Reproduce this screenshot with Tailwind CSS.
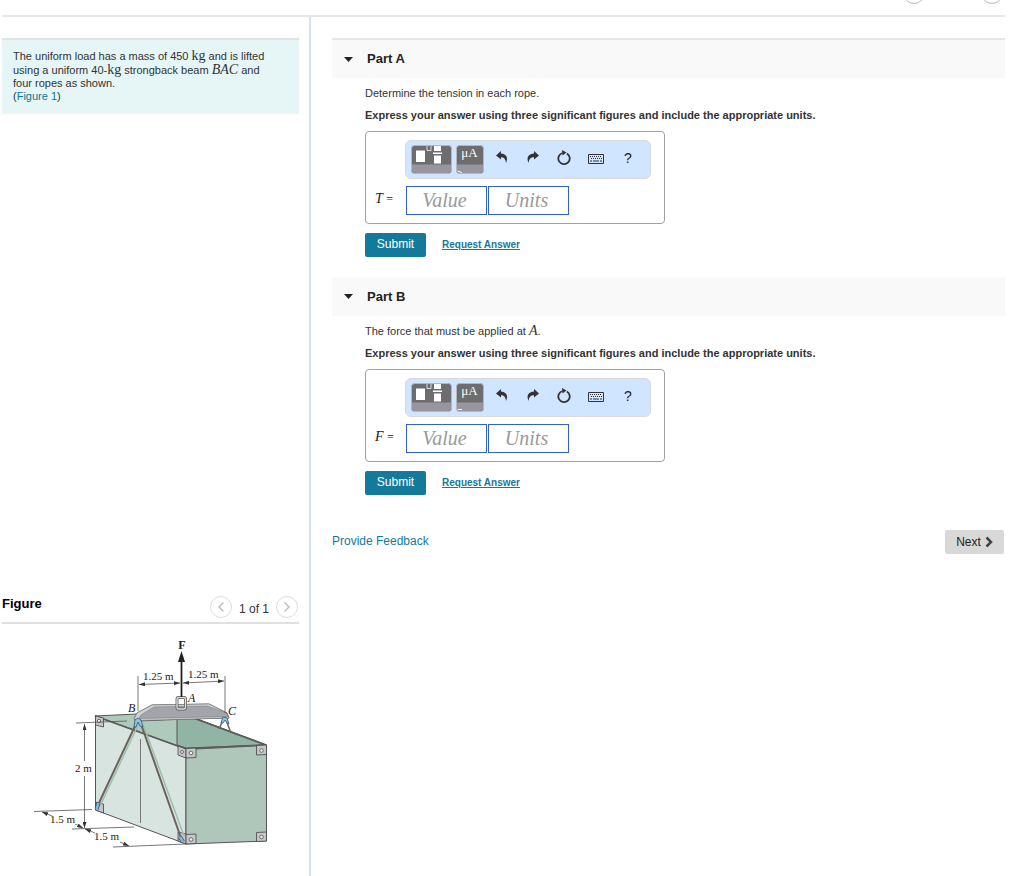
<!DOCTYPE html>
<html lang="en">
<head>
    <meta charset="UTF-8">
    <meta name="viewport" content="width=device-width, initial-scale=1.0">
    <title>Strongback Beam - Homework</title>
    <script src="https://cdn.jsdelivr.net/npm/@tailwindcss/browser@4"></script>
</head>
<body class="flex flex-col min-h-screen bg-white font-['Liberation_Sans',sans-serif] text-[11px] text-[#333]">

    <!-- Top bar -->
    <header class="ml-0.5 mr-[19px] h-[17px] overflow-hidden border-b-2 border-[#e6e6e6] flex justify-end items-end gap-14 pb-[11px] pr-0.5">
        <button aria-label="Previous item" class="shrink-0 w-[22px] h-[22px] rounded-full border border-[#bbb]"></button>
        <button aria-label="Next item" class="shrink-0 w-[22px] h-[22px] rounded-full border border-[#bbb]"></button>
    </header>

    <div class="flex flex-1">
        <!-- Problem text and figure -->
        <aside class="w-[311px] shrink-0 pl-0.5 pr-2.5 pt-[21px] border-r-2 border-[#d8e0ea] flex flex-col justify-between">
            <div class="border-t-2 border-[#dfe5e5] bg-[#e6f6f7] pl-[11px] pr-6 pt-[9px] pb-[11px] leading-[13px]">
                <p>The uniform load has a mass of 450 <span class="font-['Liberation_Serif',serif] text-[14px] leading-none">kg</span> and is lifted using a uniform 40-<span class="font-['Liberation_Serif',serif] text-[14px] leading-none">kg</span> strongback beam <i class="font-['Liberation_Serif',serif] text-[14px] leading-none">BAC</i> and four ropes as shown.</p>
                <p>(<a href="#figure" class="text-[#047a9c]">Figure 1</a>)</p>
            </div>

            <section id="figure">
                <div class="flex items-center justify-between border-b-2 border-[#e0e0e0] pb-1 pr-px">
                    <h2 class="text-[13px] leading-4 font-bold text-black pb-1.5">Figure</h2>
                    <div class="flex items-center gap-[7px]">
                        <button aria-label="Previous figure" class="w-[22px] h-[22px] rounded-full border border-[#ddd] flex items-center justify-center">
                            <svg class="w-2 h-3" viewBox="0 0 8 12" fill="none" stroke="#bbb" stroke-width="1.4"><path d="M6.500 1.500L2 6L6.500 10.500"/></svg>
                        </button>
                        <span class="text-[12px] leading-4 pt-1">1 of 1</span>
                        <button aria-label="Next figure" class="w-[22px] h-[22px] rounded-full border border-[#ddd] flex items-center justify-center">
                            <svg class="w-2 h-3" viewBox="0 0 8 12" fill="none" stroke="#bbb" stroke-width="1.4"><path d="M1.500 1.500L6 6L1.500 10.500"/></svg>
                        </button>
                    </div>
                </div>

                <svg class="block w-full" viewBox="2 624 297 252" role="img" aria-label="Container lifted by a strongback beam">
                    <defs>
                        <marker id="tip" viewBox="0 0 6 4" refX="6" refY="2" markerWidth="6" markerHeight="4" markerUnits="userSpaceOnUse" orient="auto-start-reverse"><path d="M0 0L6 2L0 4Z" fill="#333"/></marker>
                    </defs>

                    <!-- container -->
                    <g stroke="#555" stroke-width="1" stroke-linejoin="round">
                        <path d="M95 716L137 714L197 719L266 745L186 749Z" fill="#aecabc"/>
                        <path d="M177 717L197 719L266 745L186 748L177 745Z" fill="#90b5a5"/>
                        <path d="M95.500 716L186 749V844L95.500 810Z" fill="#d8e4df"/>
                        <path d="M186 749L266.500 745V841L186 844Z" fill="#afc6bb"/>
                        <path d="M95 716L186 749L266 745L196 719" fill="none" stroke="#5d5d5d" stroke-width="1.800"/>
                    </g>
                    <path d="M140.500 739V823" stroke="#777" stroke-width="1"/>

                    <!-- corner brackets -->
                    <g fill="#c3c5c9" stroke="#444" stroke-width="0.800">
                        <path d="M95.500 716L103.500 718V727L95.500 725Z"/>
                        <path d="M95.500 802L103.500 804V813L95.500 810Z"/>
                        <path d="M178 746L186 749V758L178 755Z"/>
                        <path d="M186 748.500L196 748V757.500L186 758Z"/>
                        <path d="M256.500 745.500L266.500 745V754.500L256.500 755Z"/>
                        <path d="M256.500 832.500L266.500 832V841L256.500 841.500Z"/>
                        <path d="M178 832L186 834V844L178 841Z"/>
                        <path d="M186 834.500L196 834V843.500L186 844Z"/>
                    </g>
                    <g fill="#eee" stroke="#444" stroke-width="0.700">
                        <circle cx="99" cy="721" r="1.700"/>
                        <circle cx="182" cy="752" r="1.500"/>
                        <circle cx="191" cy="753" r="1.800"/>
                        <circle cx="261.500" cy="750.500" r="1.800"/>
                        <circle cx="261.500" cy="837" r="1.800"/>
                        <circle cx="191" cy="839.500" r="1.800"/>
                    </g>

                    <!-- ropes -->
                    <g fill="none">
                        <path d="M139 723L100 806M143 724L184 836" stroke="#9cc0b0" stroke-width="1.500"/>
                        <path d="M136 724L98 805M141 724L181 838" stroke="#6e625c" stroke-width="2"/>
                        <path d="M223 720L219 729M226 720L231 733" stroke="#6e625c" stroke-width="1.500"/>
                        <path d="M96.500 809L98.500 803M180 837L183 842" stroke="#345" stroke-width="4"/>
                        <path d="M96.500 809L98.500 803M180 837L183 842" stroke="#7dbbe0" stroke-width="2.600"/>
                    </g>

                    <!-- beam -->
                    <path d="M134 719L137 713L152 705L209 704L227 713L229 718L188 719L138 721Z" fill="#a3a5aa" stroke="#555" stroke-width="0.900"/>
                    <path d="M137 713L152 705L209 704L227 713L207 706L154 707L141 715L138 720L134 719Z" fill="#d0d1d3" stroke="#777" stroke-width="0.500"/>
                    <path d="M138 718.500L228 716.500L229 718L138 720.500Z" fill="#c9cacc" stroke="#666" stroke-width="0.400"/>
                    <path d="M134 727L135 720L138 718L141 720L143 727L140 726L138 722L136 727Z" fill="#8fc5e3" stroke="#357" stroke-width="0.800"/>
                    <path d="M221 723L223 717L227 718L229 724L227 723L225 720L223 723Z" fill="#8fc5e3" stroke="#357" stroke-width="0.800"/>

                    <!-- lifting ring and force -->
                    <path d="M177 703V698.500Q177 697.500 178 697.500H184.500Q185.500 697.500 185.500 698.500V703" fill="#fff"/>
                    <rect x="177" y="697.500" width="8.500" height="11.500" rx="1.500" fill="none" stroke="#555" stroke-width="2.800"/>
                    <rect x="177" y="697.500" width="8.500" height="11.500" rx="1.500" fill="none" stroke="#ddd" stroke-width="1.400"/>
                    <path d="M181.500 697V659" stroke="#222" stroke-width="1.800"/>
                    <path d="M181.500 651L178 662H185Z" fill="#222"/>

                    <!-- dimensions -->
                    <g stroke="#555" stroke-width="0.800" fill="none">
                        <path d="M138 676V711M225 676V713M76 723L127 721M34 811.500L92 809.500M72 829L134 827M113 847L186 844"/>
                        <path d="M139 684.500L180 683" marker-start="url(#tip)" marker-end="url(#tip)"/>
                        <path d="M183 683L224 681" marker-start="url(#tip)" marker-end="url(#tip)"/>
                        <path d="M84.500 761V724" marker-end="url(#tip)"/>
                        <path d="M84.500 776V828" marker-end="url(#tip)"/>
                        <path d="M52 816L42 812" marker-end="url(#tip)"/>
                        <path d="M75 824L83 828" marker-end="url(#tip)"/>
                        <path d="M95 833L85 829" marker-end="url(#tip)"/>
                        <path d="M120 842L129 846" marker-end="url(#tip)"/>
                    </g>
                    <g class="font-['Liberation_Serif',serif]" font-size="11" fill="#222">
                        <text x="182" y="649" font-size="12" font-weight="bold" text-anchor="middle">F</text>
                        <text x="143" y="680">1.25 m</text>
                        <text x="188" y="678">1.25 m</text>
                        <text x="75" y="772">2 m</text>
                        <text x="50" y="823">1.5 m</text>
                        <text x="94" y="840">1.5 m</text>
                        <g font-size="12" font-style="italic">
                            <text x="128" y="712">B</text>
                            <text x="188" y="702">A</text>
                            <text x="228" y="715">C</text>
                        </g>
                    </g>
                </svg>
            </section>
        </aside>

        <!-- Answer parts -->
        <main class="flex-1 pl-[21px] pr-[19px] pt-[21px]">
            <section class="pb-5">
                <h2 class="flex items-center gap-3.5 h-10 pl-3 border-t-2 border-[#e6e6e6] bg-[#f9f9f9] text-[13px] font-bold text-[#222]">
                    <svg class="w-[9px] h-[5px]" viewBox="0 0 9 5"><path d="M0 0H9L4.500 5Z" fill="#222"/></svg>
                    Part A
                </h2>
                <div class="pl-[33px] pt-[7px]">
                    <p class="leading-4">Determine the tension in each rope.</p>
                    <p class="leading-4 pt-1.5 font-bold">Express your answer using three significant figures and include the appropriate units.</p>
                    <div class="mt-2 w-[300px] h-[93px] rounded-[4px] border border-[#a0a0a0] pt-2 pl-[9px]">
                        <div class="ml-[30px] w-[246px] h-[39px] rounded-[6px] border border-[#d9d9d9] bg-[#d0e5ff] flex items-center pl-[5px]">
                            <button aria-label="Templates" class="w-[41px] h-[29px] mr-1">
                                <svg viewBox="0 0 41 29">
                                    <rect x="0.500" y="0.500" width="40" height="28" rx="3" fill="#6d6d70" stroke="#b5b7bb"/>
                                    <path d="M1 19.500H40V26Q40 28 38 28H3Q1 28 1 26Z" fill="#97969f"/>
                                    <path d="M5 5.500H14V17H5ZM23 1H30V6H23ZM23 10.500H30V18.500H23ZM22 7.500H31V9H22Z" fill="#fff"/>
                                    <path d="M16 1V5.500H20V1" fill="none" stroke="#ddd"/>
                                </svg>
                            </button>
                            <button aria-label="Units symbols" class="w-[28px] h-[29px] mr-3">
                                <svg viewBox="0 0 28 29">
                                    <rect x="0.500" y="0.500" width="27" height="28" rx="3" fill="#6d6d70" stroke="#b5b7bb"/>
                                    <path d="M1 19.500H27V26Q27 28 25 28H3Q1 28 1 26Z" fill="#97969f"/>
                                    <path d="M1.500 26L6 27.500" stroke="#fff"/>
                                    <text x="13.500" y="12" text-anchor="middle" font-size="13" fill="#fff" class="font-['Liberation_Serif',serif]">μA</text>
                                </svg>
                            </button>
                            <button aria-label="Undo" class="w-3 h-4 mr-[19px] mb-1">
                                <svg viewBox="0 0 12 16"><path d="M5 1L0 5.500L5 9.500V7.200Q9.500 7 10 13Q13.500 4.500 5 3.500Z" fill="#333"/></svg>
                            </button>
                            <button aria-label="Redo" class="w-3 h-4 mr-[18px] mb-1">
                                <svg viewBox="0 0 12 16"><path d="M7 1L12 5.500L7 9.500V7.200Q2 7 1.500 13Q-2 4.500 7 3.500Z" fill="#333"/></svg>
                            </button>
                            <button aria-label="Reset" class="w-3.5 h-4 mr-[17px] mb-1">
                                <svg viewBox="0 0 14 16" fill="none"><path d="M9.800 3.500A5.700 5.700 0 1 1 5.500 3" stroke="#333" stroke-width="1.800"/><path d="M5 0L9.500 2.500L5.500 5.500Z" fill="#333"/></svg>
                            </button>
                            <button aria-label="Keyboard shortcuts" class="w-4 h-4 mr-5 mb-1">
                                <svg viewBox="0 0 16 16" fill="none" stroke="#333"><path d="M0.500 4.500H15.500V13.500H0.500Z"/><path d="M2 6.500H14M3 8.500H14" stroke-dasharray="1 1"/><path d="M2 11H4M5 11H11M12 11H14"/></svg>
                            </button>
                            <button aria-label="Help" class="text-[14px] leading-4 text-[#222] mb-1">?</button>
                        </div>
                        <div class="flex items-center mt-[7px]">
                            <label for="value-a" class="w-[31px] pb-1 font-['Liberation_Serif',serif] text-[14px] leading-4 text-[#222] whitespace-nowrap"><i>T</i> <span class="text-[12px]">=</span></label>
                            <input id="value-a" type="text" placeholder="Value" class="w-[81px] h-[29px] border border-[#2f62cc] text-center pr-1 font-['Liberation_Serif',serif] italic text-[20px] leading-6 placeholder:text-[#999]">
                            <input aria-label="Units of T" type="text" placeholder="Units" class="ml-px w-[81px] h-[29px] border border-[#2f62cc] text-center pr-1 font-['Liberation_Serif',serif] italic text-[20px] leading-6 placeholder:text-[#999]">
                        </div>
                    </div>
                    <div class="flex items-center gap-4 mt-[9px]">
                        <button class="w-[61px] h-6 rounded-[2px] bg-[#147a9c] text-white text-[12px] pb-0.5">Submit</button>
                        <a href="#" class="text-[10px] font-bold text-[#147a9c] underline pb-0.5">Request Answer</a>
                    </div>
                </div>
            </section>

            <section>
                <h2 class="flex items-center gap-3.5 h-[39px] pl-3 bg-[#f9f9f9] text-[13px] font-bold text-[#222]">
                    <svg class="w-[9px] h-[5px]" viewBox="0 0 9 5"><path d="M0 0H9L4.500 5Z" fill="#222"/></svg>
                    Part B
                </h2>
                <div class="pl-[33px] pt-[7px]">
                    <p class="leading-4">The force that must be applied at <i class="font-['Liberation_Serif',serif] text-[14px] leading-none">A</i>.</p>
                    <p class="leading-4 pt-1.5 font-bold">Express your answer using three significant figures and include the appropriate units.</p>
                    <div class="mt-2 w-[300px] h-[93px] rounded-[4px] border border-[#a0a0a0] pt-2 pl-[9px]">
                        <div class="ml-[30px] w-[246px] h-[39px] rounded-[6px] border border-[#d9d9d9] bg-[#d0e5ff] flex items-center pl-[5px]">
                            <button aria-label="Templates" class="w-[41px] h-[29px] mr-1">
                                <svg viewBox="0 0 41 29">
                                    <rect x="0.500" y="0.500" width="40" height="28" rx="3" fill="#6d6d70" stroke="#b5b7bb"/>
                                    <path d="M1 19.500H40V26Q40 28 38 28H3Q1 28 1 26Z" fill="#97969f"/>
                                    <path d="M5 5.500H14V17H5ZM23 1H30V6H23ZM23 10.500H30V18.500H23ZM22 7.500H31V9H22Z" fill="#fff"/>
                                    <path d="M16 1V5.500H20V1" fill="none" stroke="#ddd"/>
                                </svg>
                            </button>
                            <button aria-label="Units symbols" class="w-[28px] h-[29px] mr-3">
                                <svg viewBox="0 0 28 29">
                                    <rect x="0.500" y="0.500" width="27" height="28" rx="3" fill="#6d6d70" stroke="#b5b7bb"/>
                                    <path d="M1 19.500H27V26Q27 28 25 28H3Q1 28 1 26Z" fill="#97969f"/>
                                    <path d="M1.500 26.500H6" stroke="#fff"/>
                                    <text x="13.500" y="12" text-anchor="middle" font-size="13" fill="#fff" class="font-['Liberation_Serif',serif]">μA</text>
                                </svg>
                            </button>
                            <button aria-label="Undo" class="w-3 h-4 mr-[19px] mb-1">
                                <svg viewBox="0 0 12 16"><path d="M5 1L0 5.500L5 9.500V7.200Q9.500 7 10 13Q13.500 4.500 5 3.500Z" fill="#333"/></svg>
                            </button>
                            <button aria-label="Redo" class="w-3 h-4 mr-[18px] mb-1">
                                <svg viewBox="0 0 12 16"><path d="M7 1L12 5.500L7 9.500V7.200Q2 7 1.500 13Q-2 4.500 7 3.500Z" fill="#333"/></svg>
                            </button>
                            <button aria-label="Reset" class="w-3.5 h-4 mr-[17px] mb-1">
                                <svg viewBox="0 0 14 16" fill="none"><path d="M9.800 3.500A5.700 5.700 0 1 1 5.500 3" stroke="#333" stroke-width="1.800"/><path d="M5 0L9.500 2.500L5.500 5.500Z" fill="#333"/></svg>
                            </button>
                            <button aria-label="Keyboard shortcuts" class="w-4 h-4 mr-5 mb-1">
                                <svg viewBox="0 0 16 16" fill="none" stroke="#333"><path d="M0.500 4.500H15.500V13.500H0.500Z"/><path d="M2 6.500H14M3 8.500H14" stroke-dasharray="1 1"/><path d="M2 11H4M5 11H11M12 11H14"/></svg>
                            </button>
                            <button aria-label="Help" class="text-[14px] leading-4 text-[#222] mb-1">?</button>
                        </div>
                        <div class="flex items-center mt-[7px]">
                            <label for="value-b" class="w-[31px] pb-1 font-['Liberation_Serif',serif] text-[14px] leading-4 text-[#222] whitespace-nowrap"><i>F</i> <span class="text-[12px]">=</span></label>
                            <input id="value-b" type="text" placeholder="Value" class="w-[81px] h-[29px] border border-[#2f62cc] text-center pr-1 font-['Liberation_Serif',serif] italic text-[20px] leading-6 placeholder:text-[#999]">
                            <input aria-label="Units of F" type="text" placeholder="Units" class="ml-px w-[81px] h-[29px] border border-[#2f62cc] text-center pr-1 font-['Liberation_Serif',serif] italic text-[20px] leading-6 placeholder:text-[#999]">
                        </div>
                    </div>
                    <div class="flex items-center gap-4 mt-[9px]">
                        <button class="w-[61px] h-6 rounded-[2px] bg-[#147a9c] text-white text-[12px] pb-0.5">Submit</button>
                        <a href="#" class="text-[10px] font-bold text-[#147a9c] underline pb-0.5">Request Answer</a>
                    </div>
                </div>
            </section>

            <div class="flex items-center justify-between mt-[35px] pr-px text-[12px]">
                <a href="#" class="text-[#147a9c] pb-0.5">Provide Feedback</a>
                <button class="w-[59px] h-6 rounded-[2px] bg-[#d8d8d8] text-[#222] flex items-center justify-center gap-1">
                    Next
                    <svg class="w-2 h-3" viewBox="0 0 8 12" fill="none" stroke="#444" stroke-width="2.500"><path d="M1.500 1.500L6 6L1.500 10.500"/></svg>
                </button>
            </div>
        </main>
    </div>

</body>
</html>
